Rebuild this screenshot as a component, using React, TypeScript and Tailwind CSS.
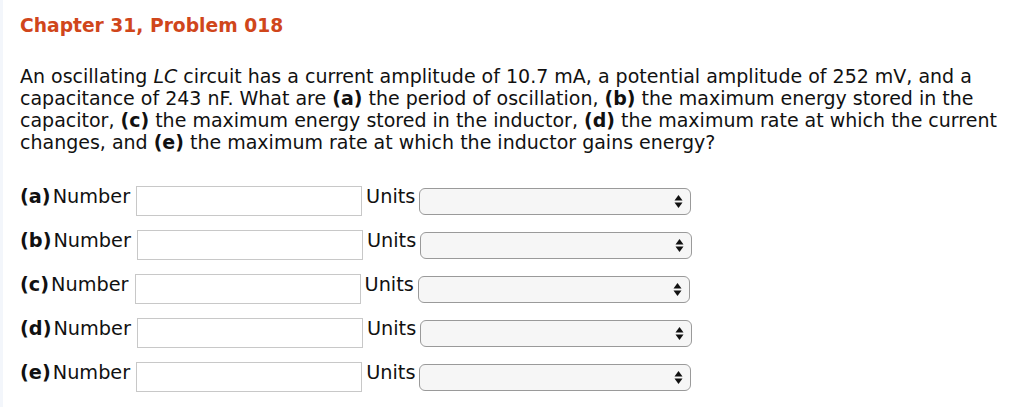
import React from "react";

const rows = ["a", "b", "c", "d", "e"];

function SelectArrows() {
  return (
    <svg width="9" height="15" viewBox="0 0 9 15" className="block">
      <path d="M4.5 1 L8.5 6.5 L0.5 6.5 Z" fill="#111" />
      <path d="M4.5 14 L8.5 8.5 L0.5 8.5 Z" fill="#111" />
    </svg>
  );
}

export default function App() {
  return (
    <div className="w-[1024px] h-[407px] bg-white flex text-black overflow-hidden" style={{ fontFamily: '"DejaVu Sans", Verdana, sans-serif' }}>
      <div className="w-[3px] bg-[#f3f6fb] shrink-0" />
      <div className="pl-[17px] pt-[14px] w-[1010px]">
        <h1 className="text-[18.7px] leading-[24px] font-bold text-[#d0461b]">Chapter 31, Problem 018</h1>
        <p className="mt-[27px] text-[19px] leading-[22px] text-[#111] w-[990px]">
          An oscillating <i>LC</i> circuit has a current amplitude of 10.7 mA, a potential amplitude of 252 mV, and a capacitance of 243 nF. What are <b>(a)</b> the period of oscillation, <b>(b)</b> the maximum energy stored in the capacitor, <b>(c)</b> the maximum energy stored in the inductor, <b>(d)</b> the maximum rate at which the current changes, and <b>(e)</b> the maximum rate at which the inductor gains energy?
        </p>
        <div className="mt-[33px] flex flex-col gap-[14px]">
          {rows.map((r) => (
            <div key={r} className="flex items-start text-[19.3px] leading-[20px] text-[#111]">
              <span className="font-bold pt-[1px]">({r})</span>
              <span className="ml-[2px] pt-[1px]">Number</span>
              <div className="ml-[6px] w-[226px] h-[30px] border border-[#c8c8c8] bg-white" />
              <span className="ml-[4px] pt-[1px]">Units</span>
              <div className="ml-[4px] mt-[2px] w-[272px] h-[27px] rounded-[6px] border border-[#9a9a9a] bg-[#f6f6f6] flex items-center justify-end pr-[7px]">
                <SelectArrows />
              </div>
            </div>
          ))}
        </div>
      </div>
    </div>
  );
}
